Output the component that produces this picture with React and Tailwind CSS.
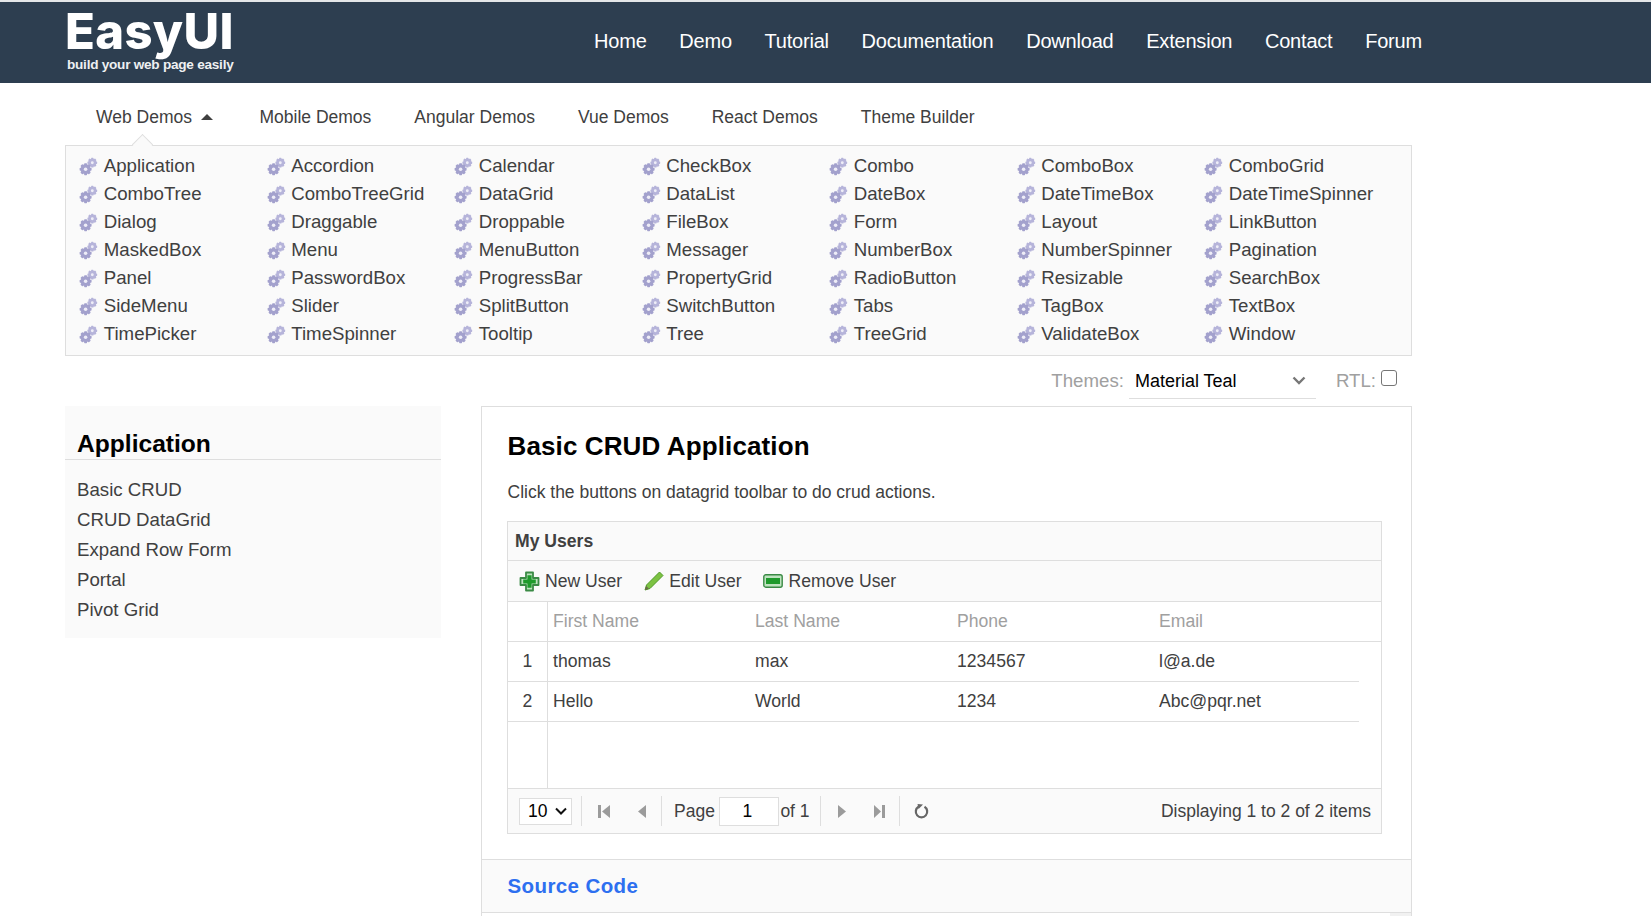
const NAV = ['Home', 'Demo', 'Tutorial', 'Documentation', 'Download', 'Extension', 'Contact', 'Forum']
const TABS = ['Mobile Demos', 'Angular Demos', 'Vue Demos', 'React Demos', 'Theme Builder']
const DEMOS = [
  'Application', 'Accordion', 'Calendar', 'CheckBox', 'Combo', 'ComboBox', 'ComboGrid',
  'ComboTree', 'ComboTreeGrid', 'DataGrid', 'DataList', 'DateBox', 'DateTimeBox', 'DateTimeSpinner',
  'Dialog', 'Draggable', 'Droppable', 'FileBox', 'Form', 'Layout', 'LinkButton',
  'MaskedBox', 'Menu', 'MenuButton', 'Messager', 'NumberBox', 'NumberSpinner', 'Pagination',
  'Panel', 'PasswordBox', 'ProgressBar', 'PropertyGrid', 'RadioButton', 'Resizable', 'SearchBox',
  'SideMenu', 'Slider', 'SplitButton', 'SwitchButton', 'Tabs', 'TagBox', 'TextBox',
  'TimePicker', 'TimeSpinner', 'Tooltip', 'Tree', 'TreeGrid', 'ValidateBox', 'Window',
]
const SIDE = ['Basic CRUD', 'CRUD DataGrid', 'Expand Row Form', 'Portal', 'Pivot Grid']
const USERS = [
  ['1', 'thomas', 'max', '1234567', 'l@a.de'],
  ['2', 'Hello', 'World', '1234', 'Abc@pqr.net'],
]

function Gear({ cx, cy, r, fill }) {
  const teeth = [0, 45, 90, 135]
  return (
    <g>
      {teeth.map((a) => (
        <rect key={a} x={cx - r * 0.3} y={cy - r * 1.22} width={r * 0.6} height={r * 2.44} rx={r * 0.15} fill={fill} transform={`rotate(${a} ${cx} ${cy})`} />
      ))}
      <circle cx={cx} cy={cy} r={r} fill={fill} />
      <circle cx={cx} cy={cy} r={r * 0.36} fill="#eeedf7" />
    </g>
  )
}

function Gears() {
  return (
    <svg width="19" height="19" viewBox="0 0 19 19" className="shrink-0">
      <Gear cx={13.3} cy={5.7} r={4} fill="#b6b4da" />
      <Gear cx={6.6} cy={12.2} r={4.9} fill="#a3a1cd" />
    </svg>
  )
}

function GridHeaderCell({ children }) {
  return <div className="flex items-center pl-[5px] pb-[1px]">{children}</div>
}

function PagerDivider() {
  return <div className="w-px h-[30px] bg-[#dedede]" />
}

export default function App() {
  return (
    <div className="h-[916px] overflow-hidden bg-white font-['Liberation_Sans',Arial,sans-serif] text-[#404040]">
      <div className="h-[2px] bg-[#e4e6e8]" />
      <header className="h-[81px] bg-[#2d3e50] flex pl-[65px]">
        <div className="w-[529px] text-white pt-[5px]">
          <div className="font-['Inter',sans-serif] font-extrabold text-[49px] leading-[49px] tracking-[0.35px]">EasyUI</div>
          <div className="font-bold text-[13.6px] leading-[14px] tracking-[-0.25px] pl-[2px] mt-[2px] text-[#eef0f2]">build your web page easily</div>
        </div>
        <nav className="flex items-center gap-[32.7px] text-white text-[20px] tracking-[-0.2px] pb-[3px]">
          {NAV.map((n) => <span key={n}>{n}</span>)}
        </nav>
      </header>

      <div className="relative h-[62px] pl-[96px] pt-[6px] flex items-center gap-[43px] text-[17.5px]">
        <span className="flex items-center mr-[3.5px]">
          Web Demos
          <span className="ml-[9px] w-0 h-0 border-x-[6px] border-x-transparent border-b-[6px] border-b-[#404040]" />
        </span>
        {TABS.map((t) => <span key={t}>{t}</span>)}
        <span className="absolute left-[135px] bottom-[-7px] w-[15px] h-[15px] rotate-45 bg-[#fafafa] border-l border-t border-[#dedede] z-10" />
      </div>

      <div className="ml-[65px] w-[1347px] h-[211px] border border-[#dedede] bg-[#fafafa] pl-[13px] pt-[6px] grid grid-cols-[repeat(7,187.5px)] auto-rows-[28px] text-[18.67px] leading-[28px]">
        {DEMOS.map((d) => (
          <div key={d} className="flex items-center gap-[5.75px] whitespace-nowrap">
            <Gears />
            <span>{d}</span>
          </div>
        ))}
      </div>

      <div className="ml-[65px] w-[1347px] h-[50px] flex justify-end items-start pt-[4px] text-[18.67px] text-[#a0a0a0] pr-[15px]">
        <span className="mt-[10px] leading-[22px]">Themes:</span>
        <div className="ml-[5px] w-[187px] h-[39px] border-b border-[#dedede] flex items-center justify-between pl-[6px] pr-[10px] text-black text-[18px]">
          <span className="mt-[5px]">Material Teal</span>
          <svg width="14" height="9" viewBox="0 0 14 9" className="mt-[3px]"><path d="M1.5 1.5 7 7l5.5-5.5" fill="none" stroke="#777" strokeWidth="2.4" /></svg>
        </div>
        <span className="ml-[20px] mt-[10px] leading-[22px]">RTL:</span>
        <span className="ml-[5px] mt-[10px] w-[16px] h-[16px] border border-[#767676] rounded-[3px] bg-white" />
      </div>

      <div className="ml-[65px] w-[1347px] flex items-start">
        <aside className="w-[376px] h-[232px] bg-[#fafafa] shrink-0">
          <h2 className="mt-[23px] pl-[12px] h-[31px] border-b border-[#dedede] text-[24.6px] leading-[30px] font-bold text-black">Application</h2>
          <ul className="pl-[12px] pt-[15px] text-[18.67px] leading-[30px]">
            {SIDE.map((s) => <li key={s}>{s}</li>)}
          </ul>
        </aside>

        <main className="ml-[40px] w-[931px]">
          <div className="border border-[#dedede] border-b-0 pb-[25px]">
            <h1 className="pl-[25.5px] pt-[24px] text-[26px] leading-[30px] font-bold text-black tracking-[0.12px]">Basic CRUD Application</h1>
            <p className="pl-[25.5px] mt-[18px] text-[17.5px] leading-[26px]">Click the buttons on datagrid toolbar to do crud actions.</p>

            <section className="ml-[25px] mt-[16px] w-[875px] h-[313px] border border-[#dedede] flex flex-col">
              <div className="h-[39px] bg-[#fafafa] border-b border-[#dedede] pl-[7px] flex items-center text-[17.6px] font-bold">My Users</div>
              <div className="h-[42px] bg-[#fafafa] border-b border-[#dedede] flex items-center pl-[11px] text-[17.6px]">
                <svg width="21" height="21" viewBox="0 0 21 21">
                  <path d="M7 1.5h7v5.5h5.5v7H14v5.5H7V14H1.5V7H7z" fill="#bfe3c0" stroke="#3a8a45" strokeWidth="1.8" strokeLinejoin="round" />
                  <path d="M8.4 4.2h4.2v4.2h4.2v4.2h-4.2v4.2H8.4v-4.2H4.2V8.4h4.2z" fill="#1f9a2c" />
                </svg>
                <span className="ml-[5px]">New User</span>
                <svg className="ml-[22px]" width="20" height="20" viewBox="0 0 20 20">
                  <path d="M15.5 1 19 4.5 6 17.5 1 19 2.5 14z" fill="#7cc242" stroke="#4f9a26" strokeLinejoin="round" />
                  <path d="M1 19 2.2 15 5 17.8z" fill="#6b6b4a" />
                </svg>
                <span className="ml-[5px]">Edit User</span>
                <svg className="ml-[21px]" width="20" height="14" viewBox="0 0 20 14">
                  <rect x="0.8" y="0.8" width="18.4" height="12.4" rx="2" fill="#bfe3c0" stroke="#3a8a45" strokeWidth="1.4" />
                  <rect x="3" y="4" width="14" height="6" fill="#1f9a2c" />
                </svg>
                <span className="ml-[6px]">Remove User</span>
              </div>

              <div className="flex-1 text-[17.6px]">
                <div className="grid grid-cols-[40px_202px_202px_202px_1fr] h-[40px] border-b border-[#dedede] text-[#a0a0a0]">
                  <div className="border-r border-[#dedede]" />
                  <GridHeaderCell>First Name</GridHeaderCell>
                  <GridHeaderCell>Last Name</GridHeaderCell>
                  <GridHeaderCell>Phone</GridHeaderCell>
                  <GridHeaderCell>Email</GridHeaderCell>
                </div>
                {USERS.map((u) => (
                  <div key={u[0]} className="grid grid-cols-[40px_202px_202px_202px_1fr] w-[851px] h-[40px] border-b border-[#dedede]">
                    <div className="border-r border-[#dedede] flex items-center justify-center pb-[1px]">{u[0]}</div>
                    {u.slice(1).map((c) => <div key={c} className="flex items-center pl-[5px] pb-[1px]">{c}</div>)}
                  </div>
                ))}
                <div className="h-[66px] w-[40px] border-r border-[#dedede]" />
              </div>

              <div className="h-[45px] bg-[#fafafa] border-t border-[#dedede] flex items-center text-[17.5px]">
                <div className="ml-[11px] w-[53px] h-[27px] border border-[#dedede] bg-white flex items-center pl-[8px] text-black">
                  <span>10</span>
                  <svg className="ml-[8px]" width="12" height="8" viewBox="0 0 12 8"><path d="M1 1.5 6 6.5l5-5" fill="none" stroke="#111" strokeWidth="2" /></svg>
                </div>
                <div className="ml-[9px]"><PagerDivider /></div>
                <svg className="ml-[16px]" width="12" height="13" viewBox="0 0 12 13" fill="#9b9b9b"><rect x="0" y="0" width="3" height="13" /><path d="M12 0v13L4 6.5z" /></svg>
                <svg className="ml-[28px]" width="8" height="13" viewBox="0 0 8 13" fill="#9b9b9b"><path d="M8 0v13L0 6.5z" /></svg>
                <div className="ml-[15px]"><PagerDivider /></div>
                <span className="ml-[12px]">Page</span>
                <div className="ml-[4px] w-[60px] h-[29px] border border-[#dedede] bg-white flex items-center justify-center pr-[3px] pb-[1px] text-black">1</div>
                <span className="ml-[1.5px]">of 1</span>
                <div className="ml-[10px]"><PagerDivider /></div>
                <svg className="ml-[17px]" width="8" height="13" viewBox="0 0 8 13" fill="#9b9b9b"><path d="M0 0v13l8-6.5z" /></svg>
                <svg className="ml-[28px]" width="11" height="13" viewBox="0 0 11 13" fill="#9b9b9b"><path d="M0 0v13l7-6.5z" /><rect x="8" y="0" width="3" height="13" /></svg>
                <div className="ml-[14px]"><PagerDivider /></div>
                <svg className="ml-[14px]" width="15" height="16" viewBox="0 0 15 16">
                  <path d="M4.5 3.8a5.7 5.7 0 1 0 6 0" fill="none" stroke="#666" strokeWidth="2.2" />
                  <path d="M3.5 1 9 1.5 4.6 6z" fill="#666" />
                </svg>
                <span className="ml-auto pr-[10px]">Displaying 1 to 2 of 2 items</span>
              </div>
            </section>
          </div>

          <div className="h-[54px] bg-[#fafafa] border border-[#dedede] pl-[25.5px] flex items-center text-[20.5px] font-bold text-[#2d6ff0] tracking-[0.4px]">Source Code</div>
          <div className="border-x border-[#dedede] flex justify-end">
            <div className="w-[21px] h-[4px] bg-[#f1f1f1]" />
          </div>
        </main>
      </div>
    </div>
  )
}
